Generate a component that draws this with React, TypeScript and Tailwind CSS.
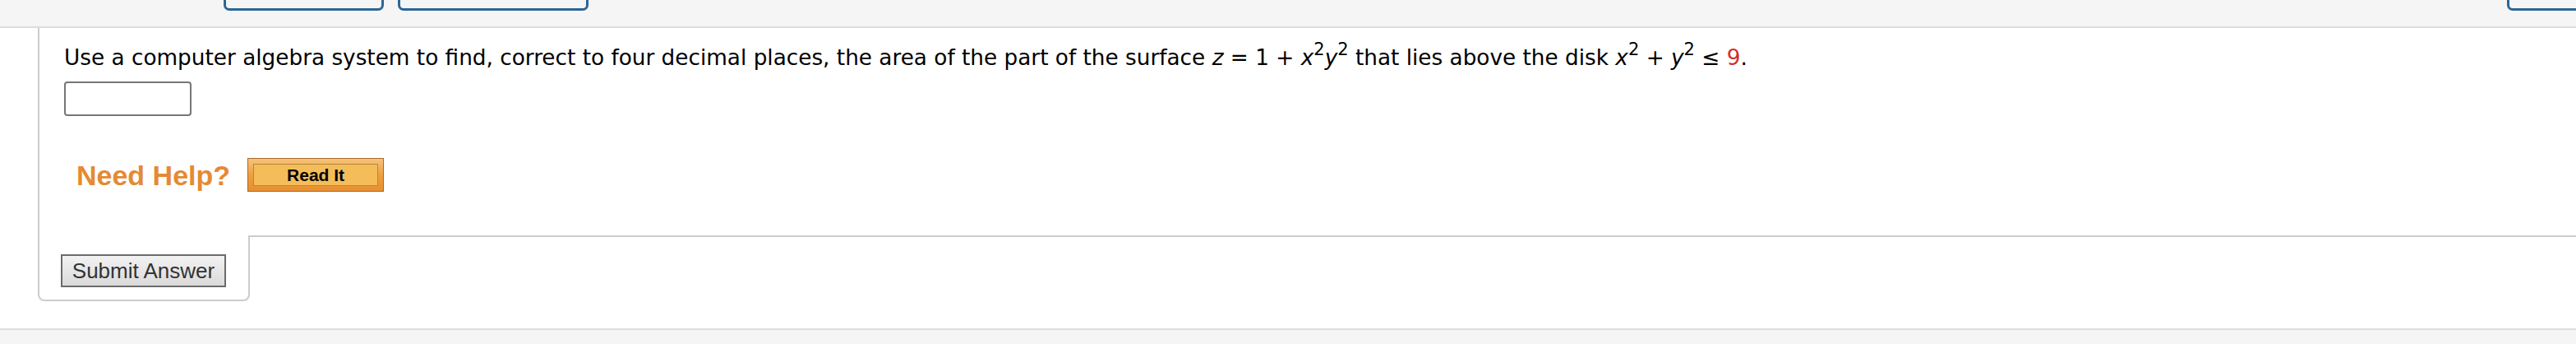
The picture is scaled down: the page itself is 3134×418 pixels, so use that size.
import React from 'react';

const verdana = { fontFamily: '"DejaVu Sans", Verdana, sans-serif' };

const Sq = () => <sup className="text-[21px] -top-[0.55em]">2</sup>;

export default function App() {
  return (
    <div className="w-[3134px] h-[418px] flex flex-col bg-white overflow-hidden">
      {/* top toolbar, buttons cut off by the viewport */}
      <div className="h-[34px] shrink-0 bg-[#f5f5f5] border-b-2 border-[#dddddd] flex items-start overflow-hidden pl-[272px]">
        <div className="w-[195px] h-[13px] shrink-0 border-x-[3px] border-b-[3px] border-[#2b6697] rounded-b-[7px]" />
        <div className="w-[232px] h-[13px] shrink-0 ml-[17px] border-x-[3px] border-b-[3px] border-[#2b6697] rounded-b-[7px]" />
        <div className="w-[100px] h-[13px] shrink-0 ml-auto -mr-[16px] border-x-[3px] border-b-[3px] border-[#2b6697] rounded-b-[7px]" />
      </div>

      <div className="flex-1 pl-[46px]">
        {/* question panel */}
        <div className="h-[252px] border-l-2 border-[#cccccc] pl-[30px] pt-[21px]" style={verdana}>
          <div className="h-[30px] text-[26.3px] leading-[30px] text-black whitespace-nowrap">
            Use a computer algebra system to find, correct to four decimal places, the area of the part of the surface{' '}
            <i>z</i> = 1 + <i>x</i>
            <Sq />
            <i>y</i>
            <Sq /> that lies above the disk <i>x</i>
            <Sq /> + <i>y</i>
            <Sq /> ≤ <span className="text-[#d12f2f]">9</span>.
          </div>

          <input
            type="text"
            className="block mt-[14px] w-[155px] h-[42px] border-2 border-[#767676] rounded-[4px] bg-white"
          />

          <div className="mt-[51px] ml-[15px] flex items-center gap-[21px]" style={{ fontFamily: '"Liberation Sans", Arial, sans-serif' }}>
            <span className="text-[34px] leading-[38px] font-bold text-[#e48a34]">Need Help?</span>
            <button className="w-[166px] h-[41px] border border-[#a8692c] bg-gradient-to-b from-[#f6c37a] via-[#ef9f3e] to-[#e68f33] p-[6px]">
              <div className="w-full h-full border border-[#b2883d] bg-[#f4bd5a] flex items-center justify-center text-[21px] font-bold text-black leading-none">
                Read It
              </div>
            </button>
          </div>
        </div>

        {/* submit tab + rule */}
        <div className="flex h-[80px]">
          <div className="w-[258px] shrink-0 border-l-2 border-r-2 border-b-2 border-[#cccccc] rounded-b-[8px] pl-[26px] pt-[23px]">
            <button
              className="w-[201px] h-[40px] border-2 border-[#6b6b6b] bg-gradient-to-b from-[#f2f2f2] to-[#dadada] text-[26px] leading-none text-[#333333]"
              style={{ fontFamily: '"Liberation Sans", Arial, sans-serif' }}
            >
              Submit Answer
            </button>
          </div>
          <div className="flex-1 border-t-2 border-[#cccccc]" />
        </div>
      </div>

      <div className="h-[19px] shrink-0 bg-[#f5f5f5] border-t-2 border-[#dddddd]" />
    </div>
  );
}
